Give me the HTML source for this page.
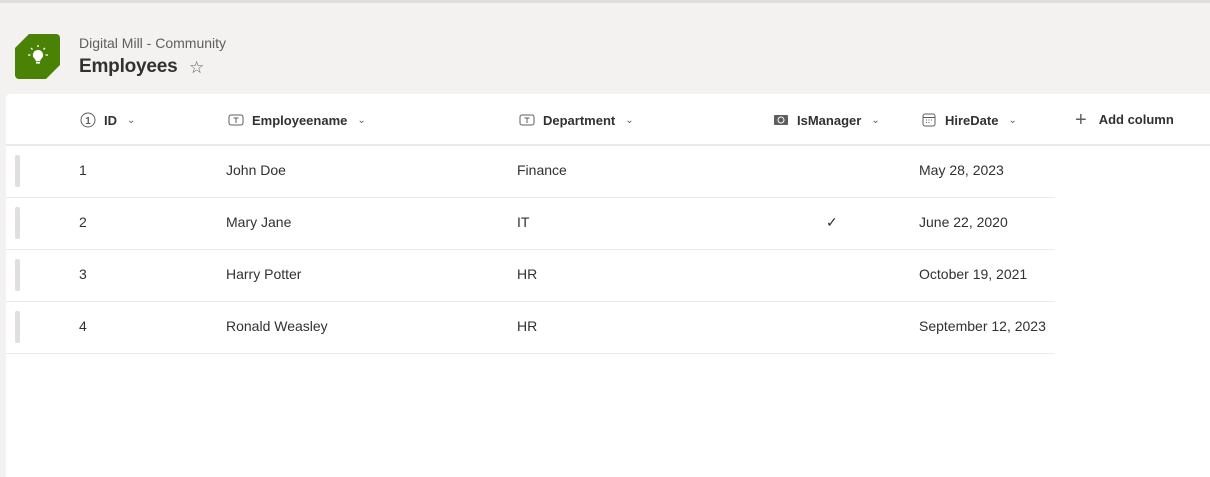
<!DOCTYPE html>
<html><head><style>
*{margin:0;padding:0;box-sizing:border-box}
body{width:1210px;height:477px;background:#f3f2f1;font-family:"Liberation Sans",sans-serif;position:relative;overflow:hidden;color:#323130}
.topline{position:absolute;left:0;top:0;width:1210px;height:3px;background:#e1dfdd}
.logo{position:absolute;left:15px;top:34px;width:45px;height:45px;background:#498205;border-radius:4px;clip-path:polygon(14px 0,100% 0,100% 31px,31px 100%,0 100%,0 14px)}
.site{position:absolute;left:79px;top:35px;font-size:14px;color:#605e5c}
.title{position:absolute;left:79px;top:56px;font-size:19px;font-weight:bold;color:#323130;letter-spacing:-0.2px}
.star{position:absolute;left:189px;top:58px;font-size:17px;color:#605e5c}
.panel{position:absolute;left:6px;top:94px;width:1204px;height:383px;background:#fff;border-radius:4px 0 0 0}
.hdr{position:absolute;top:112px;font-size:13px;font-weight:bold;color:#323130;display:flex;align-items:center;gap:8px}
.chev{font-weight:normal;font-size:10px;color:#605e5c;margin-left:2px}
.hline{position:absolute;left:6px;top:144px;width:1204px;height:2px;background:#edebe9}
.row{position:absolute;left:6px;width:1049px;height:52px;border-bottom:1px solid #edebe9}
.bar{position:absolute;left:9px;top:9px;width:5px;height:32px;background:#e1dfdd;border-radius:2px}
.c{position:absolute;top:16px;font-size:14px;color:#323130}
</style></head><body>
<div class="topline"></div>
<div class="logo"><svg width="45" height="45" viewBox="0 0 45 45"><g stroke="#fff" stroke-width="1.3" fill="none"><line x1="23" y1="11" x2="23" y2="13"/><line x1="16" y1="14" x2="17.5" y2="15.5"/><line x1="30" y1="14" x2="28.5" y2="15.5"/><line x1="13" y1="21" x2="15.5" y2="21"/><line x1="30.5" y1="21" x2="33" y2="21"/></g><path d="M23 16a5 5 0 0 0-3.3 8.8c.8.8 1 1.6 1 2.4h4.6c0-.8.2-1.6 1-2.4A5 5 0 0 0 23 16z" fill="#fff"/><rect x="21" y="28" width="4" height="1.6" fill="#fff"/></svg></div>
<div class="site">Digital Mill - Community</div>
<div class="title">Employees</div>
<div class="star">☆</div>
<div class="panel"></div>
<div class="hdr" style="left:80px"><svg width="16" height="16"><circle cx="8" cy="8" r="7" stroke="#605e5c" fill="none"/><text x="8" y="12" font-size="10" text-anchor="middle" fill="#605e5c" font-family="Liberation Sans">1</text></svg>ID<span class="chev">⌄</span></div>
<div class="hdr" style="left:228px"><svg width="16" height="16"><rect x="1" y="3" width="14" height="10" rx="2" stroke="#605e5c" fill="none"/><path d="M5.5 6h5M8 6v5" stroke="#605e5c"/></svg>Employeename<span class="chev">⌄</span></div>
<div class="hdr" style="left:519px"><svg width="16" height="16"><rect x="1" y="3" width="14" height="10" rx="2" stroke="#605e5c" fill="none"/><path d="M5.5 6h5M8 6v5" stroke="#605e5c"/></svg>Department<span class="chev">⌄</span></div>
<div class="hdr" style="left:773px"><svg width="16" height="16"><rect x="1" y="3" width="14" height="10" rx="1" fill="#605e5c"/><circle cx="8" cy="8" r="3" fill="none" stroke="#fff"/></svg>IsManager<span class="chev">⌄</span></div>
<div class="hdr" style="left:921px"><svg width="16" height="16"><rect x="2" y="2" width="12" height="12" rx="2" stroke="#605e5c" fill="none"/><path d="M2 5.5h12" stroke="#605e5c"/><path d="M5 8h1M7.5 8h1M10 8h1M5 10.5h1M7.5 10.5h1" stroke="#605e5c"/></svg>HireDate<span class="chev">⌄</span></div>
<div class="hdr" style="left:1075px"><span style="font-weight:normal;font-size:20px;color:#605e5c;margin-right:4px;line-height:14px">+</span>Add column</div>
<div class="hline"></div>
<div class="row" style="top:146px"><div class="bar"></div><span class="c" style="left:73px">1</span><span class="c" style="left:220px">John Doe</span><span class="c" style="left:511px">Finance</span><span class="c" style="left:913px">May 28, 2023</span></div>
<div class="row" style="top:198px"><div class="bar"></div><span class="c" style="left:73px">2</span><span class="c" style="left:220px">Mary Jane</span><span class="c" style="left:511px">IT</span><span class="c" style="left:820px">✓</span><span class="c" style="left:913px">June 22, 2020</span></div>
<div class="row" style="top:250px"><div class="bar"></div><span class="c" style="left:73px">3</span><span class="c" style="left:220px">Harry Potter</span><span class="c" style="left:511px">HR</span><span class="c" style="left:913px">October 19, 2021</span></div>
<div class="row" style="top:302px"><div class="bar"></div><span class="c" style="left:73px">4</span><span class="c" style="left:220px">Ronald Weasley</span><span class="c" style="left:511px">HR</span><span class="c" style="left:913px">September 12, 2023</span></div>
</body></html>
